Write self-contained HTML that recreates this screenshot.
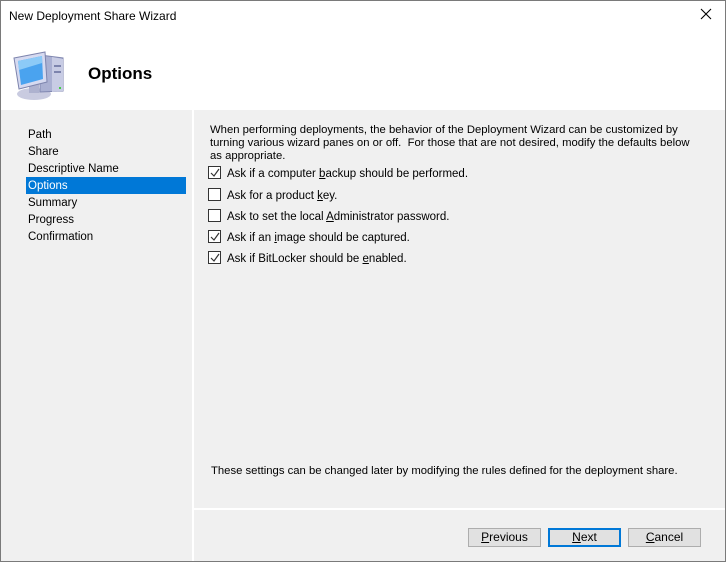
<!DOCTYPE html>
<html><head><style>
*{margin:0;padding:0;box-sizing:border-box}
body{width:726px;height:562px;position:relative;background:#f0f0f0;font-family:"Liberation Sans",sans-serif;font-size:11.5px;color:#000;overflow:hidden}
.a{position:absolute;white-space:nowrap}
u{text-decoration:underline}
.cb{position:absolute;left:208px;width:13px;height:13px;border:1px solid #333;background:#fff}
.btn{position:absolute;top:528px;width:73px;height:19px;border:1px solid #adadad;background:#e1e1e1;text-align:center;line-height:17px;font-size:12px}
</style></head><body>
<div class="a" style="left:0;top:0;width:726px;height:562px;border:1px solid #7a7a7a;"></div>
<div class="a" style="left:1px;top:1px;width:724px;height:109px;background:#fff"></div>
<div class="a" style="left:9px;top:9px;font-size:12px">New Deployment Share Wizard</div>
<svg class="a" style="left:700px;top:8px" width="12" height="12"><path d="M1 1L11 11M11 1L1 11" stroke="#000" stroke-width="1.1"/></svg>
<svg class="a" style="left:12px;top:50px" width="56" height="52" viewBox="0 0 56 52">
<ellipse cx="22" cy="44" rx="17" ry="6" fill="#c9cbe0"/>
<rect x="17" y="33" width="10" height="10" fill="#aeb2cf"/>
<path d="M28 5L51 8L51 41L28 42Z" fill="#aab0d2" stroke="#8087b0"/>
<path d="M40 7L51 9L51 41L40 42Z" fill="#c8cce4"/>
<rect x="42" y="15" width="7" height="2" fill="#7d84ad"/>
<rect x="42" y="21" width="7" height="2" fill="#7d84ad"/>
<rect x="47" y="37" width="2" height="2" fill="#4c4"/>
<path d="M2 8L33 2L35 32L7 39Z" fill="#d6daf0" stroke="#7d84ad"/>
<path d="M6 11L30 6L31 29L9 35Z" fill="#4aa3ef"/>
<path d="M6 11L30 6L30 13L7 20Z" fill="#8ccaf7"/>
</svg>
<div class="a" style="left:88px;top:64px;font-size:17px;font-weight:bold">Options</div>
<div class="a" style="left:192px;top:110px;width:2px;height:451px;background:#fff"></div>
<div class="a" style="left:194px;top:508px;width:531px;height:2px;background:#fff"></div>
<div class="a" style="left:28px;top:129px">Path</div>
<div class="a" style="left:28px;top:146px">Share</div>
<div class="a" style="left:28px;top:163px">Descriptive Name</div>
<div class="a" style="left:26px;top:177px;width:160px;height:17px;background:#0078d7"></div>
<div class="a" style="left:28px;top:180px;color:#fff">Options</div>
<div class="a" style="left:28px;top:197px">Summary</div>
<div class="a" style="left:28px;top:214px">Progress</div>
<div class="a" style="left:28px;top:231px">Confirmation</div>
<div class="a" style="left:210px;top:124px;line-height:12.8px;font-size:11.3px">When performing deployments, the behavior of the Deployment Wizard can be customized by<br>turning various wizard panes on or off.&nbsp; For those that are not desired, modify the defaults below<br>as appropriate.</div>
<div class="cb" style="top:166px"></div><svg class="a" style="left:210px;top:168px" width="10" height="10"><path d="M1 5L4 8L9 1" stroke="#333" fill="none" stroke-width="1.2"/></svg>
<div class="a" style="left:227px;top:168px">Ask if a computer <u>b</u>ackup should be performed.</div>
<div class="cb" style="top:188px"></div>
<div class="a" style="left:227px;top:190px">Ask for a product <u>k</u>ey.</div>
<div class="cb" style="top:209px"></div>
<div class="a" style="left:227px;top:211px">Ask to set the local <u>A</u>dministrator password.</div>
<div class="cb" style="top:230px"></div><svg class="a" style="left:210px;top:232px" width="10" height="10"><path d="M1 5L4 8L9 1" stroke="#333" fill="none" stroke-width="1.2"/></svg>
<div class="a" style="left:227px;top:232px">Ask if an <u>i</u>mage should be captured.</div>
<div class="cb" style="top:251px"></div><svg class="a" style="left:210px;top:253px" width="10" height="10"><path d="M1 5L4 8L9 1" stroke="#333" fill="none" stroke-width="1.2"/></svg>
<div class="a" style="left:227px;top:253px">Ask if BitLocker should be <u>e</u>nabled.</div>
<div class="a" style="left:211px;top:465px;font-size:11.3px">These settings can be changed later by modifying the rules defined for the deployment share.</div>
<div class="btn" style="left:468px"><u>P</u>revious</div>
<div class="btn" style="left:548px;border:2px solid #0078d7;line-height:15px"><u>N</u>ext</div>
<div class="btn" style="left:628px"><u>C</u>ancel</div>
</body></html>
